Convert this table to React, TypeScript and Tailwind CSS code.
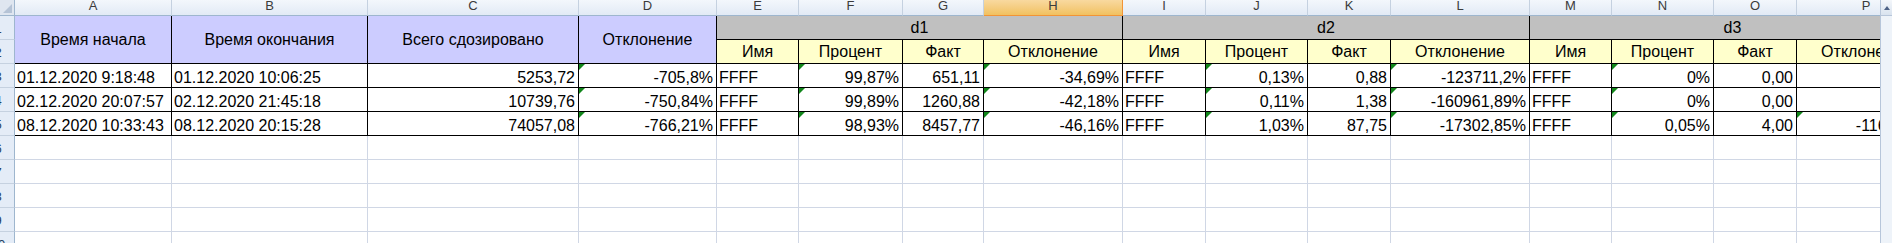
import React from "react";

// Column letters of the visible sheet area
const letters = ["A", "B", "C", "D", "E", "F", "G", "H", "I", "J", "K", "L", "M", "N", "O", "P"];

interface CellData {
  v: string;
  right?: boolean;
  tri?: boolean; // green "number stored as text" marker
}

const L = (v: string): CellData => ({ v });
const R = (v: string): CellData => ({ v, right: true });
const T = (v: string): CellData => ({ v, right: true, tri: true });

const rows: CellData[][] = [
  [
    L("01.12.2020 9:18:48"), L("01.12.2020 10:06:25"), R("5253,72"), T("-705,8%"),
    L("FFFF"), T("99,87%"), R("651,11"), T("-34,69%"),
    L("FFFF"), T("0,13%"), R("0,88"), T("-123711,2%"),
    L("FFFF"), T("0%"), R("0,00"), R(""),
  ],
  [
    L("02.12.2020 20:07:57"), L("02.12.2020 21:45:18"), R("10739,76"), T("-750,84%"),
    L("FFFF"), T("99,89%"), R("1260,88"), T("-42,18%"),
    L("FFFF"), T("0,11%"), R("1,38"), T("-160961,89%"),
    L("FFFF"), T("0%"), R("0,00"), R(""),
  ],
  [
    L("08.12.2020 10:33:43"), L("08.12.2020 20:15:28"), R("74057,08"), T("-766,21%"),
    L("FFFF"), T("98,93%"), R("8457,77"), T("-46,16%"),
    L("FFFF"), T("1,03%"), R("87,75"), T("-17302,85%"),
    L("FFFF"), T("0,05%"), R("4,00"), T("-11650,8%"),
  ],
];

const mainHeaders = ["Время начала", "Время окончания", "Всего сдозировано", "Отклонение"];
const groups = ["d1", "d2", "d3"];
const subHeaders = ["Имя", "Процент", "Факт", "Отклонение"];

function RowHeader({ n }: { n: number }) {
  return (
    <div className="flex items-end overflow-hidden border-b border-r border-b-[#c5d1e0] border-r-[#9eb6ce] bg-[#e4ecf7] pb-[3px]">
      <div className="-ml-[17px] w-[30px] shrink-0 text-center text-[13px] leading-[15px] text-[#27415f]">
        {n}
      </div>
    </div>
  );
}

function ColHeader({ letter }: { letter: string }) {
  const active = letter === "H";
  return (
    <div
      className={
        active
          ? "flex items-end justify-center border-b border-r border-b-[#f29436] border-r-[#f29436] bg-gradient-to-b from-[#f9d99f] to-[#f1c15f] pb-[3px] text-[13px] leading-[13px] text-[#3b3b3b]"
          : "flex items-end justify-center border-b border-r border-b-[#9eb6ce] border-r-[#c5d1e0] bg-gradient-to-b from-[#f3f7fc] to-[#e2eaf5] pb-[3px] text-[13px] leading-[13px] text-[#3b3b3b]"
      }
    >
      {letter}
    </div>
  );
}

function DataCell({ cell }: { cell: CellData }) {
  return (
    <div
      className={
        "relative flex items-end overflow-visible whitespace-nowrap border-b border-r border-black leading-[18px] " +
        (cell.right ? "justify-end pr-[3px]" : "justify-start pl-[2px]")
      }
    >
      {cell.tri && (
        <span className="absolute left-0 top-0 h-0 w-0 border-r-[6px] border-t-[6px] border-r-transparent border-t-[#11861a]" />
      )}
      {cell.v}
    </div>
  );
}

export default function App() {
  return (
    <div className="flex h-[243px] w-[1892px] overflow-hidden bg-white font-['Liberation_Sans',Arial,sans-serif] text-[16px] text-black">
      <div className="min-w-0 flex-1 overflow-hidden">
        <div className="grid w-[1936px] grid-cols-[15px_157px_196px_211px_138px_82px_104px_81px_139px_83px_102px_83px_139px_82px_102px_83px_139px] grid-rows-[16px_repeat(10,24px)]">
          {/* select-all corner */}
          <div className="relative border-b border-r border-b-[#9eb6ce] border-r-[#9eb6ce] bg-[#dfe6f0]">
            <span className="absolute bottom-[2px] right-[2px] h-0 w-0 border-b-[9px] border-l-[9px] border-b-[#b5c3d6] border-l-transparent" />
          </div>
          {letters.map((l) => (
            <ColHeader key={l} letter={l} />
          ))}

          {/* row 1 */}
          <RowHeader n={1} />
          {mainHeaders.map((h) => (
            <div
              key={h}
              className="row-span-2 flex items-center justify-center border-b border-r border-black bg-[#ccccff] leading-[18px]"
            >
              {h}
            </div>
          ))}
          {groups.map((g) => (
            <div
              key={g}
              className="col-span-4 flex items-center justify-center border-b border-r border-black bg-[#c0c0c0] leading-[18px]"
            >
              {g}
            </div>
          ))}

          {/* row 2 */}
          <RowHeader n={2} />
          {groups.flatMap((g) =>
            subHeaders.map((s) => (
              <div
                key={g + s}
                className="flex items-center justify-center overflow-hidden whitespace-nowrap border-b border-r border-black bg-[#ffffcc] leading-[18px]"
              >
                {s}
              </div>
            ))
          )}

          {/* data rows */}
          {rows.map((row, i) => (
            <React.Fragment key={i}>
              <RowHeader n={i + 3} />
              {row.map((c, j) => (
                <DataCell key={j} cell={c} />
              ))}
            </React.Fragment>
          ))}

          {/* empty rows */}
          {[6, 7, 8, 9, 10].map((n) => (
            <React.Fragment key={n}>
              <RowHeader n={n} />
              {letters.map((l) => (
                <div key={l} className="border-b border-r border-[#d0d7e5]" />
              ))}
            </React.Fragment>
          ))}
        </div>
      </div>

      {/* vertical scrollbar */}
      <div className="flex w-[12px] shrink-0 flex-col border-l border-[#b7c6da] bg-[#eef3f9]">
        <div className="flex h-[16px] items-center justify-center border-b border-[#b7c6da] bg-gradient-to-b from-[#f4f7fb] to-[#d9e3ef]">
          <span className="h-0 w-0 border-b-[4px] border-l-[3px] border-r-[3px] border-b-[#4d6185] border-l-transparent border-r-transparent" />
        </div>
      </div>
    </div>
  );
}
